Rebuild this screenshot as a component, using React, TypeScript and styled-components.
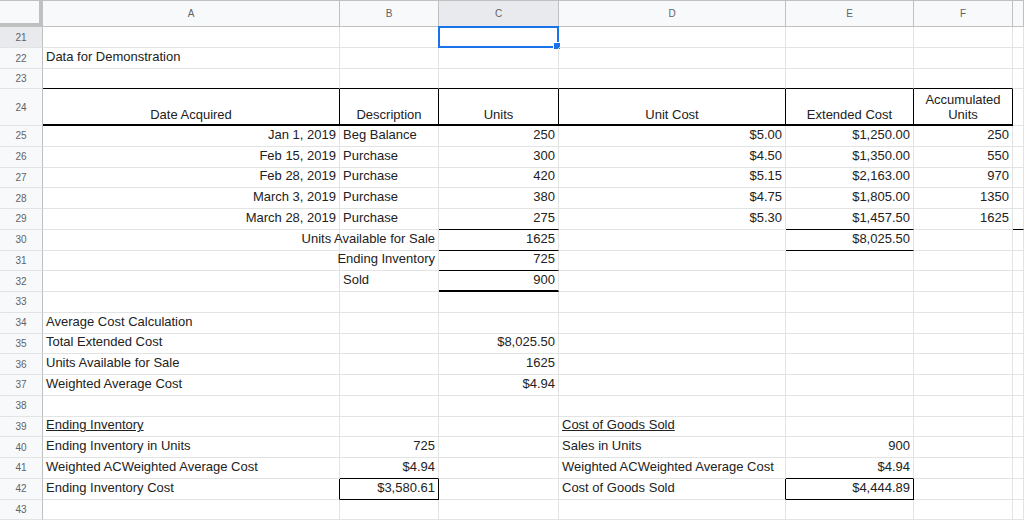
import React from "react";
import styled, { createGlobalStyle } from "styled-components";

const Global = createGlobalStyle`
  html, body { margin: 0; padding: 0; background: #fff; overflow: hidden; }
  body { font-family: "Liberation Sans", Arial, sans-serif; }
`;

const GRID = "#e2e3e3";

const Sheet = styled.div`
  display: grid;
  grid-template-columns: 43px 297px 99px 120px 227px 128px 99px 1fr;
  grid-template-rows: 27px 21px 21px 20px 37px repeat(19, 20.75px);
  width: 1024px;
  height: 520px;
  overflow: hidden;
`;

const ColHead = styled.div<{ $sel?: boolean; $corner?: boolean }>`
  background: ${(p) => (p.$sel ? "#e8eaed" : "#f8f9fa")};
  border-right: 1px solid #c0c0c0;
  border-bottom: ${(p) => (p.$corner ? "4px solid #c0c0c0" : "1px solid #c0c0c0")};
  border-right-width: ${(p) => (p.$corner ? "4px" : "1px")};
  border-top: 1px solid #c0c0c0;
  box-sizing: border-box;
  display: flex;
  align-items: center;
  justify-content: center;
  font-size: 10px;
  color: #5f6368;
`;

const RowHead = styled.div<{ $sel?: boolean }>`
  background: ${(p) => (p.$sel ? "#e8eaed" : "#f8f9fa")};
  border-right: 1px solid #c0c0c0;
  border-bottom: 1px solid ${GRID};
  box-sizing: border-box;
  display: flex;
  align-items: center;
  justify-content: center;
  font-size: 10px;
  color: #5f6368;
`;

const Cell = styled.div<{
  $align: string;
  $rb?: boolean;
  $bb?: boolean;
  $bbw?: number;
  $u?: boolean;
  $bottom?: boolean;
  $wrap?: boolean;
}>`
  position: relative;
  box-sizing: border-box;
  border-right: 1px solid ${(p) => (p.$rb ? "#000" : GRID)};
  border-bottom: ${(p) => (p.$bbw || 1)}px solid ${(p) => (p.$bb ? "#000" : GRID)};
  display: flex;
  align-items: ${(p) => (p.$bottom ? "flex-end" : "center")};
  justify-content: ${(p) =>
    p.$align === "r" ? "flex-end" : p.$align === "c" ? "center" : "flex-start"};
  padding: 0 3px 1px 3px;
  font-size: 13px;
  color: #222;
  white-space: ${(p) => (p.$wrap ? "normal" : "nowrap")};
  text-align: ${(p) => (p.$align === "c" ? "center" : "left")};
  line-height: 1.15;
  text-decoration: ${(p) => (p.$u ? "underline" : "none")};
  overflow: visible;
`;

const Sel = styled.div`
  position: absolute;
  inset: -1px -1px -1px -1px;
  border: 2px solid #1a73e8;
  pointer-events: none;
`;
const Handle = styled.div`
  position: absolute;
  right: -4px;
  bottom: -4px;
  width: 6px;
  height: 6px;
  background: #1a73e8;
  border: 1px solid #fff;
`;

type C = {
  t?: string;
  a?: string;
  rb?: boolean;
  bb?: boolean;
  bbw?: number;
  u?: boolean;
  bottom?: boolean;
  wrap?: boolean;
  sel?: boolean;
};

const e = (): C => ({});
const L = (t: string, x: Partial<C> = {}): C => ({ t, a: "l", ...x });
const R = (t: string, x: Partial<C> = {}): C => ({ t, a: "r", ...x });
const H = (t: string, x: Partial<C> = {}): C => ({ t, a: "c", rb: true, bb: true, bbw: 2, bottom: true, ...x });

const empty7 = () => [e(), e(), e(), e(), e(), e(), e()];
const purchases: [string, string, string, string, string, string][] = [
  ["Jan 1, 2019", "Beg Balance", "250", "$5.00", "$1,250.00", "250"],
  ["Feb 15, 2019", "Purchase", "300", "$4.50", "$1,350.00", "550"],
  ["Feb 28, 2019", "Purchase", "420", "$5.15", "$2,163.00", "970"],
  ["March 3, 2019", "Purchase", "380", "$4.75", "$1,805.00", "1350"],
  ["March 28, 2019", "Purchase", "275", "$5.30", "$1,457.50", "1625"],
];

const rows: [number, C[]][] = [
  [21, [e(), e(), { sel: true }, e(), e(), e(), e()]],
  [22, [L("Data for Demonstration"), e(), e(), e(), e(), e(), e()]],
  [23, [{ bb: true }, { bb: true }, { bb: true }, { bb: true }, { bb: true }, { bb: true }, e()]],
  [
    24,
    [
      H("Date Acquired"),
      H("Description"),
      H("Units"),
      H("Unit Cost"),
      H("Extended Cost"),
      H("Accumulated Units", { wrap: true }),
      e(),
    ],
  ],
  ...purchases.map(
    (p, i): [number, C[]] => [
      25 + i,
      [
        R(p[0]),
        L(p[1]),
        R(p[2], { bb: i === 4 }),
        R(p[3]),
        R(p[4], { bb: i === 4 }),
        R(p[5]),
        i === 4 ? { bb: true } : e(),
      ],
    ]
  ),
  [30, [e(), R("Units Available for Sale"), R("1625", { bb: true }), e(), R("$8,025.50", { bb: true }), e(), e()]],
  [31, [e(), R("Ending Inventory"), R("725", { bb: true }), e(), e(), e(), e()]],
  [32, [e(), L("Sold"), R("900", { bb: true, bbw: 2 }), e(), e(), e(), e()]],
  [33, empty7()],
  [34, [L("Average Cost Calculation"), e(), e(), e(), e(), e(), e()]],
  [35, [L("Total Extended Cost"), e(), R("$8,025.50"), e(), e(), e(), e()]],
  [36, [L("Units Available for Sale"), e(), R("1625"), e(), e(), e(), e()]],
  [37, [L("Weighted Average Cost"), e(), R("$4.94"), e(), e(), e(), e()]],
  [38, empty7()],
  [39, [L("Ending Inventory", { u: true }), e(), e(), L("Cost of Goods Sold", { u: true }), e(), e(), e()]],
  [40, [L("Ending Inventory in Units"), R("725"), e(), L("Sales in Units"), R("900"), e(), e()]],
  [
    41,
    [
      L("Weighted ACWeighted Average Cost"),
      R("$4.94", { bb: true }),
      e(),
      L("Weighted ACWeighted Average Cost"),
      R("$4.94", { bb: true }),
      e(),
      e(),
    ],
  ],
  [
    42,
    [
      L("Ending Inventory Cost", { rb: true }),
      R("$3,580.61", { rb: true, bb: true }),
      e(),
      L("Cost of Goods Sold", { rb: true }),
      R("$4,444.89", { rb: true, bb: true }),
      e(),
      e(),
    ],
  ],
  [43, empty7()],
];

const letters = ["A", "B", "C", "D", "E", "F", ""];

export default function App() {
  return (
    <>
      <Global />
      <Sheet>
        <ColHead $corner />
        {letters.map((l, i) => (
          <ColHead key={i} $sel={l === "C"}>
            {l}
          </ColHead>
        ))}
        {rows.map(([n, cells]) => (
          <React.Fragment key={n}>
            <RowHead $sel={n === 21}>{n}</RowHead>
            {cells.map((c, i) => (
              <Cell
                key={i}
                $align={c.a || "l"}
                $rb={c.rb || (n === 24 && i === 5)}
                $bb={c.bb}
                $bbw={c.bbw}
                $u={c.u}
                $bottom={c.bottom}
                $wrap={c.wrap}
              >
                {c.t}
                {c.sel && (
                  <Sel>
                    <Handle />
                  </Sel>
                )}
              </Cell>
            ))}
          </React.Fragment>
        ))}
      </Sheet>
    </>
  );
}
